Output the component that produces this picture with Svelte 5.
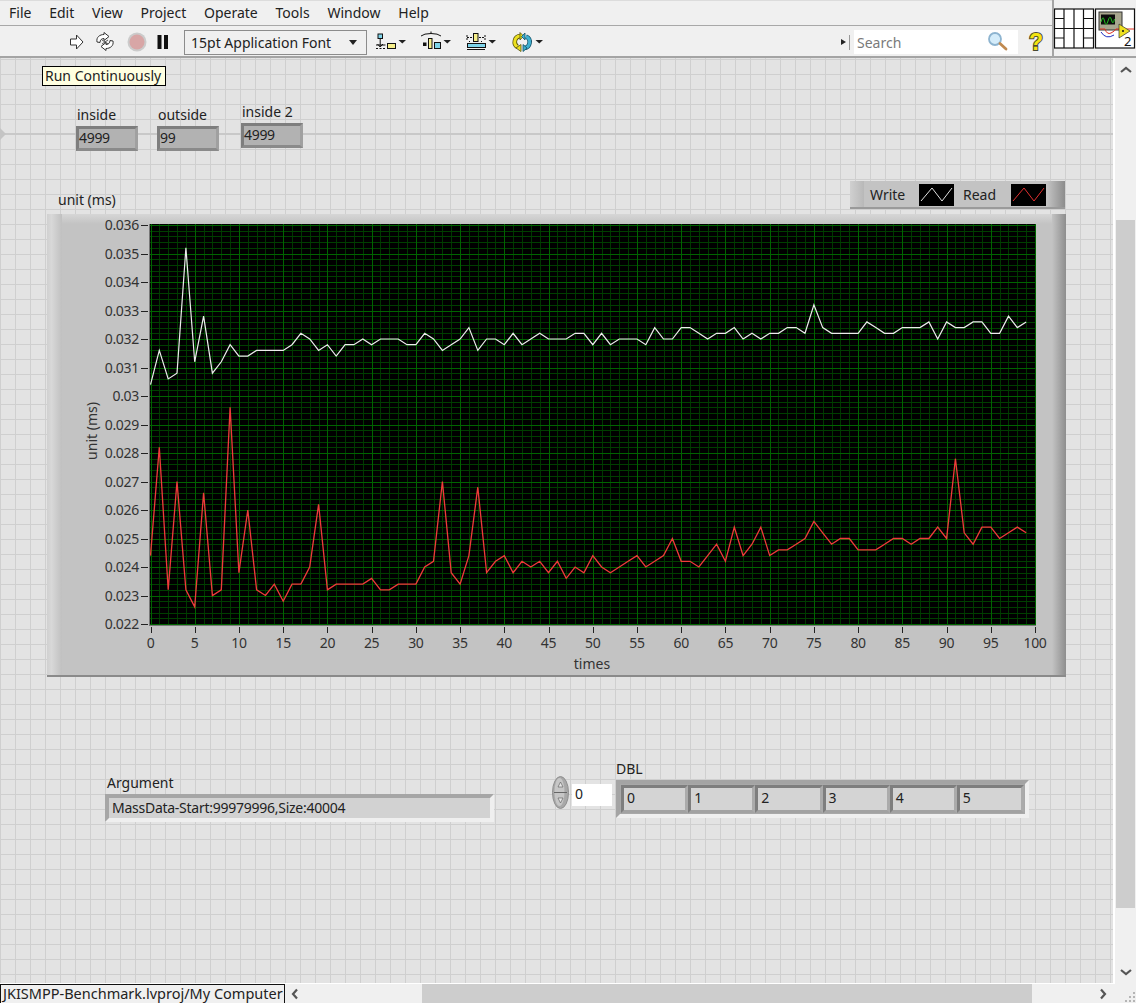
<script>
  const menus = ['File', 'Edit', 'View', 'Project', 'Operate', 'Tools', 'Window', 'Help'];

  // sampled values, in ms * 1000
  const writeData = [30.4,31.6,30.6,30.8,35.2,31.2,32.8,30.8,31.2,31.8,31.4,31.4,31.6,31.6,31.6,31.6,31.8,32.2,32,31.6,
    31.8,31.4,31.8,31.8,32,31.8,32,32,32,31.8,31.8,32.2,32,31.6,31.8,32,32.4,31.6,32,32,
    31.8,32.2,31.8,32,32.2,32,32,32,32.2,32.2,31.8,32.2,31.8,32,32,32,31.8,32.4,32,32,
    32.4,32.4,32.2,32,32.2,32.2,32.4,32,32.2,32,32.2,32.2,32.4,32.4,32.2,33.2,32.4,32.2,32.2,32.2,
    32.2,32.6,32.4,32.2,32.2,32.4,32.4,32.4,32.6,32,32.6,32.4,32.4,32.6,32.6,32.2,32.2,32.8,32.4,32.6];
  const readData = [24.4,28.2,23.2,27,23.2,22.6,26.6,23,23.2,29.6,23.8,26,23.2,23,23.4,22.8,23.4,23.4,24,26.2,
    23.2,23.4,23.4,23.4,23.4,23.6,23.2,23.2,23.4,23.4,23.4,24,24.2,27,23.8,23.4,24.4,26.8,23.8,24.2,
    24.4,23.8,24.2,24,24.2,23.8,24.2,23.6,24,23.8,24.4,24,23.8,24,24.2,24.4,24,24.2,24.4,25,
    24.2,24.2,24,24.4,24.8,24.2,25.4,24.4,24.8,25.4,24.4,24.6,24.6,24.8,25,25.6,25.2,24.8,25,25,
    24.6,24.6,24.6,24.8,25,25,24.8,25,25,25.4,25,27.8,25.2,24.8,25.4,25.4,25,25.2,25.4,25.2];

  const px = (t) => 103.5 + 8.845 * t;
  const py = (v) => 11 + (36 - v) * 28.5;
  const toPoints = (data) => data.map((v, i) => `${px(i).toFixed(1)},${py(v).toFixed(1)}`).join(' ');

  const xMinor = Array.from({ length: 101 }, (_, i) => i);
  const yMinor = Array.from({ length: 71 }, (_, i) => 22 + i * 0.2);
  const xTicks = Array.from({ length: 21 }, (_, i) => i * 5);
  const yTicks = Array.from({ length: 15 }, (_, i) => 22 + i);

  const yLabel = (v) => (v === 30 ? '0.03' : `0.0${v}`);
  const cells = [0, 1, 2, 3, 4, 5];
</script>

<div class="window">
  <nav class="menubar">
    {#each menus as m}
      <span>{m}</span>
    {/each}
  </nav>

  <div class="toolbar">
    <svg class="tool run" width="16" height="18" viewBox="0 0 16 18">
      <path d="M1.500 6h6V2l6.500 7-6.500 7v-4h-6z" fill="#fff" stroke="#333" stroke-width="1" />
    </svg>
    <svg class="tool cont" width="22" height="20" viewBox="0 0 22 20">
      <path d="M3 10c-1-5 3-7.500 7-7.500V.5l5 4-5 4V6.500c-2.500 0-4 1.500-4 4z" fill="#fff" stroke="#333" />
      <path d="M19 9c1 5-3 7.500-7 7.500v2l-5-4 5-4v2c2.500 0 4-1.500 4-4z" fill="#fff" stroke="#333" />
      <path d="M8 8l3 2-3 2M14 8l-3 2 3 2" fill="none" stroke="#333" stroke-width="0.800" />
    </svg>
    <svg class="tool abort" width="20" height="20" viewBox="0 0 20 20">
      <circle cx="10" cy="10" r="9.500" fill="#cbcbcb" />
      <circle cx="10" cy="10" r="7.500" fill="#d8a6a6" />
    </svg>
    <svg class="tool pause" width="12" height="14" viewBox="0 0 12 14">
      <rect x="0.500" y="0" width="4" height="14" fill="#111" />
      <rect x="7" y="0" width="4" height="14" fill="#111" />
    </svg>
    <div class="fontbox">
      <span>15pt Application Font</span>
      <i class="caret"></i>
    </div>
    <svg class="tool align" width="30" height="22" viewBox="0 0 30 22">
      <rect x="2" y="3" width="4.500" height="4.500" fill="#7fd4ea" stroke="#111" />
      <path d="M4.200 8v8M1.500 13l2.700 3 2.700-3M0 14h9.500M0 17.500h2M3.500 17.500h2M7 17.500h2" stroke="#111" fill="none" />
      <rect x="11.500" y="12.500" width="8" height="5" fill="#f5ee8a" stroke="#111" />
      <path d="M22.500 9H30l-3.700 3.500z" fill="#222" />
    </svg>
    <svg class="tool dist" width="30" height="22" viewBox="0 0 30 22">
      <path d="M0 5q3-2.500 10-2.500T20 5M10 0.500v2" stroke="#111" fill="none" />
      <rect x="2" y="11.500" width="3.500" height="3.500" fill="#111" />
      <rect x="7.500" y="7.500" width="3.500" height="10" fill="#f5ee8a" stroke="#111" />
      <rect x="13.500" y="11.500" width="6" height="6" fill="#7fd4ea" stroke="#111" />
      <path d="M22.500 9H30l-3.700 3.500z" fill="#222" />
    </svg>
    <svg class="tool size" width="30" height="22" viewBox="0 0 30 22">
      <rect x="7.500" y="2.500" width="4.500" height="8" fill="#f5ee8a" stroke="#111" />
      <path d="M1 6.500h5.500M13 6.500h6M1 4v5M19 4v5M3 10.500h1M15 10.500h1" stroke="#111" fill="none" stroke-dasharray="2 1" />
      <rect x="1.500" y="12.500" width="18" height="4" fill="#7fd4ea" stroke="#111" />
      <path d="M1 18.500h18" stroke="#111" />
      <path d="M22.500 9H30l-3.700 3.500z" fill="#222" />
    </svg>
    <svg class="tool order" width="32" height="22" viewBox="0 0 32 22">
      <g fill="none">
        <path d="M9 5A6 6 0 0 0 6.500 16" stroke="#55500a" stroke-width="4.500" />
        <path d="M9 5A6 6 0 0 0 6.500 16" stroke="#ece020" stroke-width="3" />
        <path d="M13 17A6 6 0 0 0 15 5.500" stroke="#0f4f66" stroke-width="4.500" />
        <path d="M13 17A6 6 0 0 0 15 5.500" stroke="#3fb0d0" stroke-width="3" />
      </g>
      <path d="M9 1.500l3.500 3.500L9 9z" fill="#ece020" stroke="#55500a" stroke-width="0.800" />
      <path d="M10 20.500 5 17l5-3.500z" fill="#ece020" stroke="#55500a" stroke-width="0.800" />
      <path d="M14 2l-3.500 3.500L14 9z" fill="#3fb0d0" stroke="#0f4f66" stroke-width="0.800" />
      <path d="M12 13.500v7l4-3.500z" fill="#3fb0d0" stroke="#0f4f66" stroke-width="0.800" />
      <path d="M24.500 9H32l-3.700 3.500z" fill="#222" />
    </svg>

    <div class="search">
      <i class="mini"></i>
      <i class="sep"></i>
      <div class="searchbox">
        <span>Search</span>
        <svg width="24" height="22" viewBox="0 0 24 22">
          <circle cx="9" cy="8" r="6" fill="#d4ecfa" stroke="#8db4d0" stroke-width="1.800" />
          <path d="M14 12.500l6 5.500" stroke="#c08a50" stroke-width="2.800" stroke-linecap="round" />
        </svg>
      </div>
      <span class="help">?</span>
    </div>
  </div>

  <div class="corner">
    <svg width="82" height="41" viewBox="0 0 82 41">
      <g fill="#fff" stroke="#111" stroke-width="1.200">
        <rect x="0.500" y="1" width="39" height="39" />
        <rect x="41.500" y="1" width="39" height="39" />
      </g>
      <path d="M10 1v39M20 1v39M29.500 1v39M0.500 10.500H10M0.500 30H10M29.500 10.500h10M29.500 30h10M0.500 20.500h39" stroke="#111" stroke-width="1.200" fill="none" />
      <rect x="45" y="4" width="23" height="18" fill="#a8a68e" stroke="#333" />
      <rect x="47" y="6.500" width="14" height="10" fill="#0c0c0c" />
      <path d="M47 14q2-8 3.500-1t3.500 0 3.500-1 3-1" stroke="#22c020" fill="none" />
      <path d="M46 21h5q2 6 6 4t5-4h18" stroke="#e03020" fill="none" />
      <path d="M47 24q5 8 13 3" stroke="#2030c0" fill="none" />
      <path d="M65 16l11 7-11 7z" fill="#eee020" stroke="#333" stroke-width="0.700" />
      <circle cx="69" cy="23" r="1" fill="#111" />
      <text class="conn" x="70" y="38">2</text>
    </svg>
  </div>

  <div class="body">
    <main class="panel">
      <i class="divider"></i>
      <i class="pin"></i>

      <div class="tip">Run Continuously</div>

      <label class="lab l-inside">inside</label>
      <div class="num n-inside">4999</div>
      <label class="lab l-outside">outside</label>
      <div class="num n-outside">99</div>
      <label class="lab l-inside2">inside 2</label>
      <div class="num n-inside2">4999</div>

      <label class="lab l-graph">unit (ms)</label>
      <div class="legend">
        <span class="lg-name">Write</span>
        <svg class="swatch" width="35" height="22" viewBox="0 0 35 22">
          <polyline points="2,17 13,4 23,17 33,4" fill="none" stroke="#e0e0e0" />
        </svg>
        <span class="lg-name">Read</span>
        <svg class="swatch" width="35" height="22" viewBox="0 0 35 22">
          <polyline points="2,17 13,4 23,17 33,4" fill="none" stroke="#e03030" />
        </svg>
      </div>

      <div class="graph">
        <svg width="1019" height="461" viewBox="0 0 1019 461">
          <rect x="102" y="10" width="887" height="401" fill="#000" />
          <g shape-rendering="crispEdges" stroke-width="1">
            {#each xMinor as t}
              {#if t % 5 !== 0}
                <line x1={Math.round(px(t)) + 0.5} x2={Math.round(px(t)) + 0.5} y1="10" y2="411" stroke="#003800" />
              {/if}
            {/each}
            {#each yMinor as v, i}
              {#if i % 5 !== 0}
                <line x1="102" x2="989" y1={Math.round(py(v)) + 0.5} y2={Math.round(py(v)) + 0.5} stroke="#003f00" />
              {/if}
            {/each}
            {#each xTicks as t}
              <line x1={Math.round(px(t)) + 0.5} x2={Math.round(px(t)) + 0.5} y1="10" y2="411" stroke="#006400" />
            {/each}
            {#each yTicks as v}
              <line x1="102" x2="989" y1={Math.round(py(v)) + 0.5} y2={Math.round(py(v)) + 0.5} stroke="#006400" />
            {/each}
          </g>
          <polyline points={toPoints(writeData)} fill="none" stroke="#ececec" stroke-width="1.200" />
          <polyline points={toPoints(readData)} fill="none" stroke="#f03a3a" stroke-width="1.300" />
          <path d="M102.500 10v401H989" fill="none" stroke="#777" shape-rendering="crispEdges" />

          {#each yTicks as v}
            <line x1="94" x2="101" y1={Math.round(py(v)) + 0.5} y2={Math.round(py(v)) + 0.5} stroke="#222" shape-rendering="crispEdges" />
            <text class="tick" x="92" y={py(v) + 5} text-anchor="end">{yLabel(v)}</text>
          {/each}
          {#each xTicks as t}
            <line x1={Math.round(px(t)) + 0.5} x2={Math.round(px(t)) + 0.5} y1="413" y2="419" stroke="#222" shape-rendering="crispEdges" />
            <text class="tick" x={px(t)} y="434" text-anchor="middle">{t}</text>
          {/each}
          <text class="tick plain" x="545" y="455" text-anchor="middle">times</text>
          <text class="tick plain" transform="translate(50 217) rotate(-90)" text-anchor="middle">unit (ms)</text>
        </svg>
      </div>

      <label class="lab l-arg">Argument</label>
      <div class="strbox"><span>MassData-Start:99979996,Size:40004</span></div>

      <div class="spinner">
        <svg width="17" height="33" viewBox="0 0 17 33">
          <ellipse cx="8.500" cy="16.500" rx="8" ry="16" fill="#a8a8a8" stroke="#8e8e8e" />
          <ellipse cx="7.500" cy="16" rx="5" ry="14" fill="#c6c6c6" />
          <path d="M2 16.500h13" stroke="#666" />
          <path d="M8.500 6l-2.500 5h5zM8.500 27l-2.500-5h5z" fill="#e8e8e8" stroke="#666" stroke-width="0.700" />
        </svg>
      </div>
      <div class="indexbox">0</div>

      <label class="lab l-dbl">DBL</label>
      <div class="array">
        {#each cells as c}
          <div class="cell">{c}</div>
        {/each}
      </div>
    </main>

    <aside class="vscroll">
      <svg width="14" height="10" viewBox="0 0 14 10"><path d="M2 7l5-4 5 4" fill="none" stroke="#555" stroke-width="2.200" /></svg>
      <div class="vtrack"><div class="vthumb"></div></div>
      <svg width="14" height="10" viewBox="0 0 14 10"><path d="M2 3l5 4 5-4" fill="none" stroke="#555" stroke-width="2.200" /></svg>
    </aside>
  </div>

  <footer class="statusbar">
    <div class="path">JKISMPP-Benchmark.lvproj/My Computer</div>
    <svg class="chev" width="10" height="14" viewBox="0 0 10 14"><path d="M7 2.500 3 7l4 4.500" fill="none" stroke="#555" stroke-width="2.200" /></svg>
    <div class="htrack"><div class="hthumb"></div></div>
    <svg class="chev" width="10" height="14" viewBox="0 0 10 14"><path d="M3 2.500 7 7l-4 4.500" fill="none" stroke="#555" stroke-width="2.200" /></svg>
    <svg class="grip" width="12" height="11" viewBox="0 0 12 11">
      <g fill="#b5b5b5">
        <rect x="9" y="0" width="2" height="2" /><rect x="5" y="4" width="2" height="2" /><rect x="9" y="4" width="2" height="2" />
        <rect x="1" y="8" width="2" height="2" /><rect x="5" y="8" width="2" height="2" /><rect x="9" y="8" width="2" height="2" />
      </g>
    </svg>
  </footer>
</div>

<style>
  :global(body) {
    margin: 0;
    background: #f0f0f0;
  }
  .window {
    position: relative;
    width: 1136px;
    height: 1003px;
    display: flex;
    flex-direction: column;
    overflow: hidden;
    font-family: "Noto Sans", "Open Sans", sans-serif;
    font-size: 14px;
    color: #222;
  }

  .menubar {
    height: 26px;
    box-sizing: border-box;
    padding: 0 0 2px 9px;
    display: flex;
    align-items: center;
    gap: 17.800px;
    background: #f0f0f0;
    border-top: 1px solid #dcdcdc;
    border-bottom: 1px solid #a8a8a8;
    font-size: 14px;
  }

  .toolbar {
    height: 32px;
    box-sizing: border-box;
    padding: 2px 0 0 69px;
    display: flex;
    align-items: center;
    background: #f0f0f0;
    border-bottom: 2px solid #a4a4a4;
  }
  .tool { flex-shrink: 0; }
  .cont { margin-left: 9px; }
  .abort { margin-left: 11px; }
  .pause { margin-left: 10px; }
  .fontbox {
    width: 183px;
    height: 25px;
    box-sizing: border-box;
    margin-left: 15px;
    padding: 0 9px 0 6px;
    border: 1px solid #8c8c8c;
    display: flex;
    align-items: center;
    justify-content: space-between;
  }
  .caret {
    width: 0;
    height: 0;
    border: 4px solid transparent;
    border-top: 5px solid #222;
    border-bottom: 0;
  }
  .align { margin-left: 9px; }
  .dist { margin-left: 15px; }
  .size { margin-left: 15px; }
  .order { margin-left: 15px; }

  .search {
    margin-left: 298px;
    display: flex;
    align-items: center;
  }
  .mini {
    width: 0;
    height: 0;
    border: 3px solid transparent;
    border-left: 5px solid #222;
    border-right: 0;
  }
  .sep {
    width: 1px;
    height: 15px;
    margin: 0 4px 0 3px;
    background: #999;
  }
  .searchbox {
    width: 164px;
    height: 24px;
    box-sizing: border-box;
    padding: 0 8px 0 3px;
    background: #fff;
    display: flex;
    align-items: center;
    justify-content: space-between;
    color: #7a7a7a;
  }
  .help {
    margin-left: 11px;
    font: bold 23px "Liberation Sans", sans-serif;
    color: #f4e410;
    -webkit-text-stroke: 2px #4a4a30;
    paint-order: stroke fill;
  }

  .corner {
    position: absolute;
    left: 1052px;
    top: 0;
    width: 84px;
    height: 56px;
    box-sizing: border-box;
    padding-top: 8px;
    background: #f0f0f0;
    border-left: 2px solid #a4a4a4;
  }
  .corner svg { display: block; }
  .conn {
    font-size: 13px;
    fill: #111;
  }

  .body {
    flex: 1;
    display: flex;
    min-height: 0;
  }
  .panel {
    position: relative;
    flex: 1;
    background-color: #e3e3e3;
    background-image:
      linear-gradient(to right, #cfcfcf 1.5px, transparent 1.5px),
      linear-gradient(to bottom, #cfcfcf 1.5px, transparent 1.5px);
    background-size: 15px 15px;
    background-position: 0 1px;
    border-right: 2px solid #fff;
    border-bottom: 1px solid #fff;
  }
  .divider {
    position: absolute;
    left: 0;
    right: 0;
    top: 75px;
    height: 2px;
    background: #c8c8c8;
  }
  .pin {
    position: absolute;
    left: 0;
    top: 70px;
    border: 6px solid transparent;
    border-left: 6px solid #c4c4c4;
    border-right: 0;
  }

  .tip {
    position: absolute;
    left: 42px;
    top: 8px;
    width: 124px;
    height: 20px;
    line-height: 18px;
    box-sizing: border-box;
    padding-left: 2px;
    background: #ffffe1;
    border: 1px solid #000;
    white-space: nowrap;
  }

  .lab {
    position: absolute;
    line-height: 18px;
    white-space: nowrap;
  }
  .l-inside { left: 77px; top: 48px; }
  .l-outside { left: 158px; top: 48px; }
  .l-inside2 { left: 242px; top: 45px; }
  .l-graph { left: 58px; top: 133px; }
  .l-arg { left: 107px; top: 716px; }
  .l-dbl { left: 616px; top: 702px; }

  .num {
    position: absolute;
    width: 62px;
    height: 25px;
    box-sizing: border-box;
    line-height: 18px;
    letter-spacing: -0.300px;
    background: #b2b2b2;
    border: 3px solid;
    border-color: #7e7e7e #a0a0a0 #8a8a8a #7e7e7e;
  }
  .n-inside { left: 76px; top: 68px; }
  .n-outside { left: 157px; top: 68px; }
  .n-inside2 { left: 241px; top: 65px; }

  .legend {
    position: absolute;
    left: 850px;
    top: 123px;
    width: 215px;
    height: 28px;
    box-sizing: border-box;
    padding: 3px 0 0 20px;
    display: flex;
    align-items: flex-start;
    background:
      linear-gradient(to right, #c3c3c3, #8c8c8c) right / 18px 100% no-repeat,
      linear-gradient(to right, #d0d0d0, #b8b8b8) left / 14px 100% no-repeat,
      #c3c3c3;
    border-bottom: 2px solid #9a9a9a;
  }
  .lg-name {
    width: 49px;
    line-height: 21px;
  }
  .swatch {
    background: #000;
    flex-shrink: 0;
    margin-right: 9px;
  }
  .swatch + .lg-name { width: 48px; }

  .graph {
    position: absolute;
    left: 47px;
    top: 156px;
    width: 1019px;
    height: 463px;
    box-sizing: border-box;
    background:
      linear-gradient(to right, #c3c3c3, #8e8e8e) right / 14px 100% no-repeat,
      linear-gradient(to right, #d0d0d0, #d8d8d8 30%, #c0c0c0) left / 15px 100% no-repeat,
      linear-gradient(#d6d6d6, #c3c3c3) top / 100% 10px no-repeat,
      #c3c3c3;
    border-bottom: 2px solid #8a8a8a;
  }
  .graph svg { display: block; }
  .tick {
    font-size: 14px;
    letter-spacing: -0.300px;
    fill: #333;
  }
  .plain { letter-spacing: 0; }

  .strbox {
    position: absolute;
    left: 105px;
    top: 736px;
    width: 389px;
    height: 28px;
    box-sizing: border-box;
    padding-left: 3px;
    line-height: 19px;
    letter-spacing: -0.260px;
    background: #d2d2d2;
    border-style: solid;
    border-width: 4px;
    border-color: #a6a6a6 #efefef #efefef #a6a6a6;
  }

  .spinner {
    position: absolute;
    left: 552px;
    top: 718px;
    height: 33px;
  }
  .indexbox {
    position: absolute;
    left: 572px;
    top: 726px;
    width: 40px;
    height: 22px;
    box-sizing: border-box;
    padding-left: 3px;
    line-height: 20px;
    background: #fff;
  }

  .array {
    position: absolute;
    left: 616px;
    top: 722px;
    width: 413px;
    height: 38px;
    box-sizing: border-box;
    padding: 1px;
    display: flex;
    background: #a8a8a8;
    border-style: solid;
    border-width: 4px;
    border-color: #a4a4a4 #efefef #efefef #a4a4a4;
  }
  .cell {
    width: 67.500px;
    height: 28px;
    box-sizing: border-box;
    padding-left: 3px;
    line-height: 20px;
    background: #d4d4d4;
    border: 3px solid;
    border-color: #7e7e7e #ababab #a2a2a2 #7e7e7e;
  }

  .vscroll {
    width: 21px;
    display: flex;
    flex-direction: column;
    align-items: center;
    background: #f0f0f0;
  }
  .vscroll svg {
    margin: 7px 0;
    flex-shrink: 0;
  }
  .vtrack {
    flex: 1;
    width: 100%;
  }
  .vthumb {
    height: 688px;
    margin: 138px 1px 0;
    background: #cdcdcd;
  }

  .statusbar {
    height: 19px;
    display: flex;
    align-items: center;
    background: #f0f0f0;
  }
  .path {
    width: 285px;
    height: 19px;
    box-sizing: border-box;
    padding-left: 2px;
    line-height: 17px;
    font-size: 14.500px;
    border: 1px solid #111;
    border-bottom: 0;
    white-space: nowrap;
    overflow: hidden;
  }
  .chev {
    flex-shrink: 0;
    margin: 0 5px;
  }
  .htrack {
    flex: 1;
    height: 100%;
  }
  .hthumb {
    height: 100%;
    margin-left: 117px;
    width: 610px;
    background: #cdcdcd;
  }
  .grip {
    flex-shrink: 0;
    margin: 8px 0 0 11px;
  }
</style>
